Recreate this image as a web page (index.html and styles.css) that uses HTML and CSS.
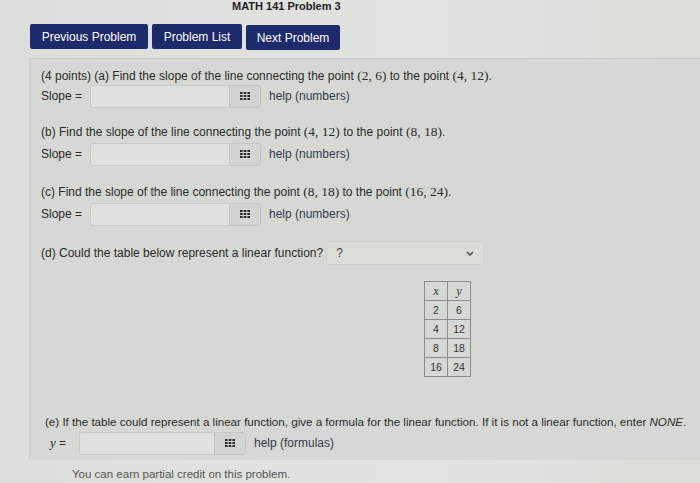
FILE: index.html
```html
<!DOCTYPE html>
<html>
<head>
<meta charset="utf-8">
<link rel="stylesheet" href="styles.css">
</head>
<body>
<div class="page">
  <h1 class="title">MATH 141 Problem 3</h1>
  <div class="nav">
    <span class="btn btn-prev">Previous Problem</span>
    <span class="btn btn-list">Problem List</span>
    <span class="btn btn-next">Next Problem</span>
  </div>
  <div class="problem">
    <div class="part part-a">
      <div class="q">(4 points) (a) Find the slope of the line connecting the point <span class="m">(2, 6)</span> to the point <span class="m">(4, 12)</span>.</div>
      <div class="ans">
        <span class="lbl">Slope =</span>
        <span class="input"></span>
        <span class="pal"><svg width="10" height="8" viewBox="0 0 10 8"><g fill="#2b2b2b"><rect x="0" y="0" width="2.6" height="2"/><rect x="3.7" y="0" width="2.6" height="2"/><rect x="7.4" y="0" width="2.6" height="2"/><rect x="0" y="3" width="2.6" height="2"/><rect x="3.7" y="3" width="2.6" height="2"/><rect x="7.4" y="3" width="2.6" height="2"/><rect x="0" y="6" width="2.6" height="2"/><rect x="3.7" y="6" width="2.6" height="2"/><rect x="7.4" y="6" width="2.6" height="2"/></g></svg></span>
        <span class="help">help (numbers)</span>
      </div>
    </div>
    <div class="part part-b">
      <div class="q">(b) Find the slope of the line connecting the point <span class="m">(4, 12)</span> to the point <span class="m">(8, 18)</span>.</div>
      <div class="ans">
        <span class="lbl">Slope =</span>
        <span class="input"></span>
        <span class="pal"><svg width="10" height="8" viewBox="0 0 10 8"><g fill="#2b2b2b"><rect x="0" y="0" width="2.6" height="2"/><rect x="3.7" y="0" width="2.6" height="2"/><rect x="7.4" y="0" width="2.6" height="2"/><rect x="0" y="3" width="2.6" height="2"/><rect x="3.7" y="3" width="2.6" height="2"/><rect x="7.4" y="3" width="2.6" height="2"/><rect x="0" y="6" width="2.6" height="2"/><rect x="3.7" y="6" width="2.6" height="2"/><rect x="7.4" y="6" width="2.6" height="2"/></g></svg></span>
        <span class="help">help (numbers)</span>
      </div>
    </div>
    <div class="part part-c">
      <div class="q">(c) Find the slope of the line connecting the point <span class="m">(8, 18)</span> to the point <span class="m">(16, 24)</span>.</div>
      <div class="ans">
        <span class="lbl">Slope =</span>
        <span class="input"></span>
        <span class="pal"><svg width="10" height="8" viewBox="0 0 10 8"><g fill="#2b2b2b"><rect x="0" y="0" width="2.6" height="2"/><rect x="3.7" y="0" width="2.6" height="2"/><rect x="7.4" y="0" width="2.6" height="2"/><rect x="0" y="3" width="2.6" height="2"/><rect x="3.7" y="3" width="2.6" height="2"/><rect x="7.4" y="3" width="2.6" height="2"/><rect x="0" y="6" width="2.6" height="2"/><rect x="3.7" y="6" width="2.6" height="2"/><rect x="7.4" y="6" width="2.6" height="2"/></g></svg></span>
        <span class="help">help (numbers)</span>
      </div>
    </div>
    <div class="part part-d">
      <span class="q">(d) Could the table below represent a linear function?</span>
      <span class="select"><span class="sel-val">?</span><svg class="chev" width="8" height="5" viewBox="0 0 8 5"><path d="M1 1 L4 4 L7 1" fill="none" stroke="#444" stroke-width="1.4"/></svg></span>
    </div>
    <div class="tablewrap">
      <table class="xy">
        <tr><td class="m i">x</td><td class="m i">y</td></tr>
        <tr><td>2</td><td>6</td></tr>
        <tr><td>4</td><td>12</td></tr>
        <tr><td>8</td><td>18</td></tr>
        <tr><td>16</td><td>24</td></tr>
      </table>
    </div>
    <div class="part part-e">
      <div class="q">(e) If the table could represent a linear function, give a formula for the linear function. If it is not a linear function, enter <i>NONE</i>.</div>
      <div class="ans">
        <span class="lbl lbl-y"><span class="m i">y</span> =</span>
        <span class="input input-e"></span>
        <span class="pal"><svg width="10" height="8" viewBox="0 0 10 8"><g fill="#2b2b2b"><rect x="0" y="0" width="2.6" height="2"/><rect x="3.7" y="0" width="2.6" height="2"/><rect x="7.4" y="0" width="2.6" height="2"/><rect x="0" y="3" width="2.6" height="2"/><rect x="3.7" y="3" width="2.6" height="2"/><rect x="7.4" y="3" width="2.6" height="2"/><rect x="0" y="6" width="2.6" height="2"/><rect x="3.7" y="6" width="2.6" height="2"/><rect x="7.4" y="6" width="2.6" height="2"/></g></svg></span>
        <span class="help">help (formulas)</span>
      </div>
    </div>
  </div>
  <div class="foot">You can earn partial credit on this problem.</div>
</div>
</body>
</html>
```

FILE: styles.css
```css
html, body {
  margin: 0;
  padding: 0;
  height: 100%;
  overflow: hidden;
}
body {
  background: #dfe1dc;
  font-family: "Liberation Sans", Arial, sans-serif;
  color: #2a2a2a;
  font-size: 12px;
}
.page {
  height: 483px;
  overflow: hidden;
  background: linear-gradient(90deg, #dcdfd9 0%, #e2e4df 60%, #dcdcd7 100%);
}
.title {
  margin: 0 0 0 232px;
  height: 12px;
  font-size: 11px;
  line-height: 12px;
  font-weight: bold;
  color: #1e1e1e;
  white-space: nowrap;
}
.nav {
  display: flex;
  gap: 4px;
  margin: 12px 0 0 30px;
}
.btn {
  display: flex;
  align-items: center;
  justify-content: center;
  height: 25px;
  background: #1d2a6b;
  color: #fff;
  font-size: 12px;
  border-radius: 2px;
  box-sizing: border-box;
}
.btn-prev { width: 118px; }
.btn-list { width: 90px; }
.btn-next { width: 94px; margin-top: 1px; }
.problem {
  margin: 8px 0 0 29px;
  padding: 9px 0 0 11px;
  height: 402px;
  box-sizing: border-box;
  background: #d6d9d3;
  border-top: 1px solid #c6c9c3;
  border-left: 1px solid #cdd0ca;
}
.q {
  line-height: 16px;
  white-space: nowrap;
}
.m {
  font-family: "Liberation Serif", "Times New Roman", serif;
  font-size: 13.5px;
}
.i { font-style: italic; }
.ans {
  display: flex;
  align-items: center;
  height: 24px;
  margin-top: 0;
}
.lbl {
  width: 49px;
}
.input {
  width: 139px;
  height: 23px;
  box-sizing: border-box;
  background: #dfe2dc;
  border: 1px solid #c8cbc5;
  border-right: none;
  border-radius: 3px 0 0 3px;
}
.pal {
  display: flex;
  align-items: center;
  justify-content: center;
  width: 32px;
  height: 23px;
  box-sizing: border-box;
  background: #d3d6d0;
  border: 1px solid #c3c6c0;
  border-radius: 0 3px 3px 0;
}
.help {
  margin-left: 8px;
  color: #333a4e;
}
.part-b { margin-top: 16px; }
.part-c { margin-top: 18px; }
.part-b .ans, .part-c .ans { margin-top: 2px; }
.part-d {
  display: flex;
  align-items: center;
  margin-top: 15px;
  height: 24px;
}
.select {
  display: flex;
  align-items: center;
  justify-content: space-between;
  width: 158px;
  height: 24px;
  box-sizing: border-box;
  margin-left: 3px;
  padding: 0 9px 0 9px;
  background: #dadcd6;
  border: 1px solid #cfd2cc;
  border-radius: 3px;
  color: #444;
  font-size: 12px;
}
.tablewrap {
  margin: 16px 0 0 383px;
}
.xy {
  border-collapse: collapse;
  border: 1px solid #6f716e;
  font-size: 10.5px;
  color: #333;
}
.xy td {
  border: 1px solid #8a8c88;
  width: 20px;
  height: 18px;
  padding: 0 1px;
  text-align: center;
}
.xy td.m { font-size: 12.5px; }
.part-e {
  margin-top: 37px;
  padding-left: 4px;
}
.part-e .q { font-size: 11.6px; }
.part-e .ans { margin-top: 1px; }
.lbl-y { width: 29px; padding-left: 5px; }
.lbl-y .m { font-size: 13px; }
.input-e { width: 135px; }
.foot {
  margin: 7px 0 0 72px;
  color: #555;
  font-size: 11.5px;
  line-height: 14px;
}
```
